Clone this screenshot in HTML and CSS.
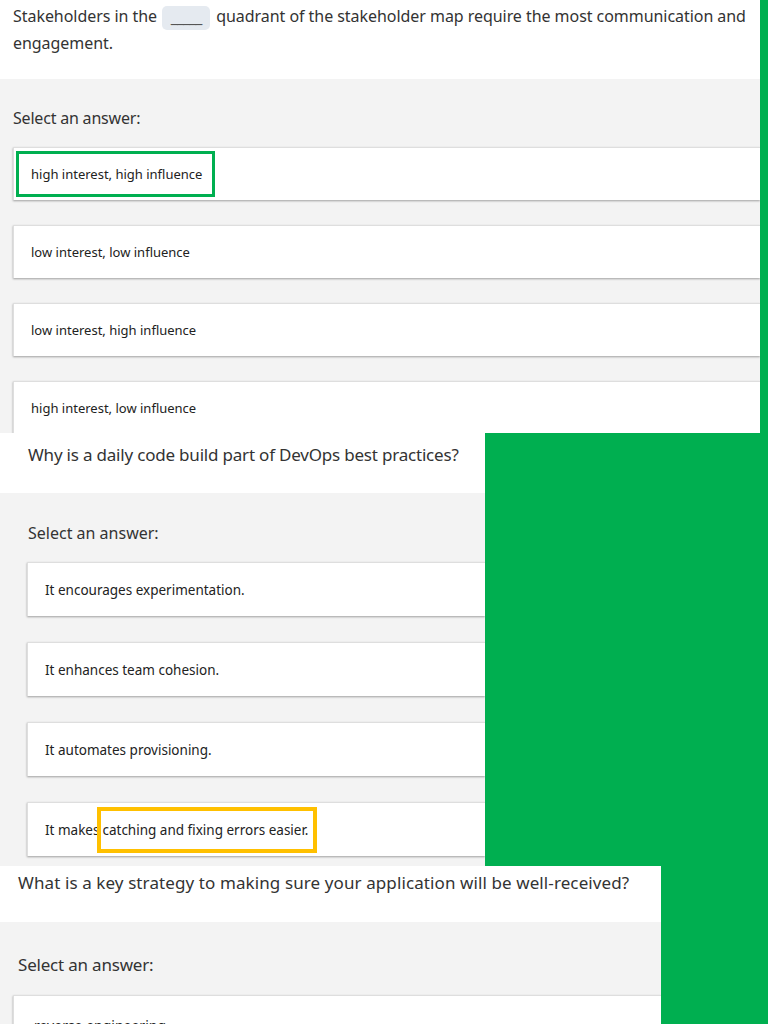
FILE: index.html
```html
<!DOCTYPE html>
<html>
<head>
<meta charset="utf-8">
<link rel="stylesheet" href="styles.css">
</head>
<body>
<div class="collage">
  <section class="panel panel-one">
    <div class="question">Stakeholders in the <span class="blank">_____</span> quadrant of the stakeholder map require the most communication and engagement.</div>
    <div class="answers">
      <div class="select-label">Select an answer:</div>
      <div class="card"><span class="mark-green">high interest, high influence</span></div>
      <div class="card">low interest, low influence</div>
      <div class="card">low interest, high influence</div>
      <div class="card">high interest, low influence</div>
    </div>
  </section>
  <section class="panel panel-two">
    <div class="question">Why is a daily code build part of DevOps best practices?</div>
    <div class="answers">
      <div class="select-label">Select an answer:</div>
      <div class="card">It encourages experimentation.</div>
      <div class="card">It enhances team cohesion.</div>
      <div class="card">It automates provisioning.</div>
      <div class="card">It makes<span class="mark-yellow">catching and fixing errors easier.</span></div>
    </div>
  </section>
  <section class="panel panel-three">
    <div class="question">What is a key strategy to making sure your application will be well-received?</div>
    <div class="answers">
      <div class="select-label">Select an answer:</div>
      <div class="card">reverse engineering</div>
    </div>
  </section>
</div>
</body>
</html>
```

FILE: styles.css
```css
html, body {
  margin: 0;
  padding: 0;
}
body {
  background: #00af50;
  font-family: "Noto Sans", "Open Sans", sans-serif;
  color: #333333;
  width: 768px;
  height: 1024px;
  overflow: hidden;
}
.collage {
  display: flex;
  flex-direction: column;
}
.panel {
  overflow: hidden;
  background: #f3f3f3;
}
.question {
  background: #ffffff;
  box-sizing: border-box;
}
.answers {
  display: flex;
  flex-direction: column;
}
.card {
  background: #ffffff;
  border-top: 1px solid #dedede;
  border-left: 1px solid #dedede;
  box-shadow: 0 1px 2px rgba(0, 0, 0, 0.35);
  display: flex;
  align-items: center;
  box-sizing: border-box;
  color: #222;
  flex-shrink: 0;
}

/* Panel one */
.panel-one {
  width: 760px;
  height: 433px;
}
.panel-one .question {
  height: 79px;
  padding: 3px 10px 0 13px;
  font-size: 16px;
  line-height: 26px;
  letter-spacing: -0.05px;
}
.blank {
  display: inline-block;
  width: 48px;
  height: 24px;
  line-height: 22px;
  vertical-align: middle;
  margin: 0 2px 0 1px;
  background: #e5eaf0;
  border-radius: 5px;
  text-align: center;
  letter-spacing: -1px;
  color: #555;
}
.panel-one .answers {
  padding: 0 0 0 13px;
  gap: 25px;
}
.panel-one .select-label {
  font-size: 16px;
  letter-spacing: -0.2px;
  line-height: 22px;
  margin-top: 28px;
  margin-bottom: -7px;
}
.panel-one .card {
  height: 53px;
  padding-left: 17px;
  font-size: 13px;
}
.mark-green {
  border: 3px solid #00af50;
  margin-left: -15px;
  padding: 11px 10px 11px 12px;
}

/* Panel two */
.panel-two {
  width: 485px;
  height: 433px;
}
.panel-two .question {
  height: 60px;
  padding: 10px 0 0 28px;
  font-size: 17px;
  line-height: 24px;
  letter-spacing: -0.2px;
}
.panel-two .answers {
  padding-left: 27px;
  gap: 26px;
}
.panel-two .select-label {
  font-size: 16px;
  line-height: 22px;
  margin-top: 29px;
  margin-bottom: -8px;
  padding-left: 1px;
}
.panel-two .card {
  height: 54px;
  padding-left: 17px;
  font-size: 13.5px;
}
.mark-yellow {
  border: 4px solid #ffc000;
  padding: 10px 5px 10px 1px;
  margin-left: -2px;
}

/* Panel three */
.panel-three {
  width: 661px;
  height: 158px;
}
.panel-three .question {
  height: 56px;
  padding: 5px 0 0 18px;
  font-size: 17px;
  line-height: 24px;
  letter-spacing: 0.1px;
}
.panel-three .answers {
  padding-left: 13px;
}
.panel-three .select-label {
  font-size: 17px;
  letter-spacing: -0.2px;
  line-height: 22px;
  margin-top: 32px;
  margin-bottom: 19px;
  padding-left: 5px;
}
.panel-three .card {
  height: 54px;
  padding-left: 20px;
  padding-top: 20px;
  align-items: flex-start;
  font-size: 14px;
}
```
